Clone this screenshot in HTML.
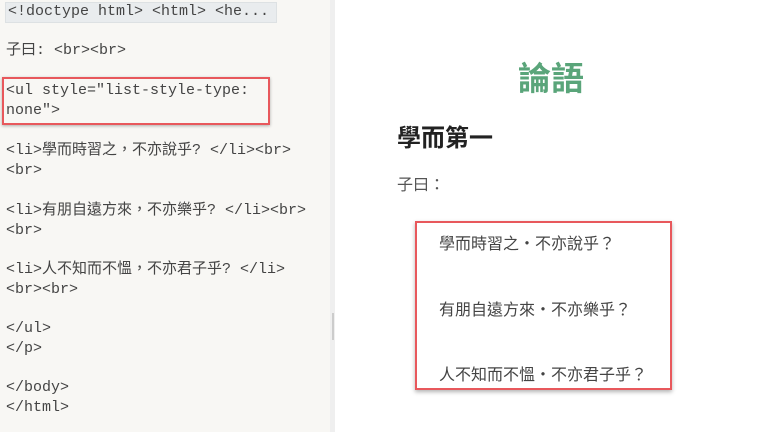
<!DOCTYPE html>
<html><head><meta charset="utf-8"><style>
body{margin:0;width:768px;height:432px;overflow:hidden;background:#fff;position:relative;font-family:"Liberation Sans","Noto Sans CJK TC",sans-serif}
#left{position:absolute;left:0;top:0;width:330px;height:432px;background:#f8f7f4}
#div{position:absolute;left:330px;top:0;width:5px;height:432px;background:#efefef}
#handle{position:absolute;left:332px;top:313px;width:2px;height:27px;background:#ccc}
.l{position:absolute;left:6px;font-family:"Liberation Mono","Noto Sans CJK TC",monospace;font-size:15px;color:#444;white-space:pre;line-height:20px}
.t{position:absolute;white-space:nowrap}
.i{font-family:"Noto Sans CJK TC",sans-serif}
</style></head><body>
<div id="left"></div><div id="div"></div><div id="handle"></div>
<div style="position:absolute;left:5px;top:2px;width:270px;height:19px;background:#e9ecee;border:1px solid #dde1e3"></div>
<div class="l" style="top:2px;left:8px">&lt;!doctype html&gt; &lt;html&gt; &lt;he...</div>
<div class="l" style="top:41px">子曰: &lt;br&gt;&lt;br&gt;</div>
<div style="position:absolute;left:2px;top:77px;width:264px;height:44px;border:2px solid #e8585c;box-shadow:0 1px 3px rgba(0,0,0,.3)"></div>
<div class="l" style="top:81px">&lt;ul style="list-style-type:
none"&gt;</div>
<div class="l" style="top:141px">&lt;li&gt;學而時習之，不亦說乎? &lt;/li&gt;&lt;br&gt;
&lt;br&gt;</div>
<div class="l" style="top:201px">&lt;li&gt;有朋自遠方來，不亦樂乎? &lt;/li&gt;&lt;br&gt;
&lt;br&gt;</div>
<div class="l" style="top:260px">&lt;li&gt;人不知而不慍，不亦君子乎? &lt;/li&gt;
&lt;br&gt;&lt;br&gt;</div>
<div class="l" style="top:319px">&lt;/ul&gt;
&lt;/p&gt;</div>
<div class="l" style="top:378px">&lt;/body&gt;
&lt;/html&gt;</div>

<div class="t" style="left:518px;top:52px;font-size:33px;font-weight:bold;color:#5aa57a">論語</div>
<div class="t" style="left:397px;top:118px;font-size:24px;font-weight:bold;color:#222">學而第一</div>
<div class="t" style="left:397px;top:171px;font-size:16px;color:#555">子曰：</div>
<div style="position:absolute;left:415px;top:221px;width:253px;height:165px;border:2px solid #e8585c;box-shadow:0 2px 4px rgba(0,0,0,.3)"></div>
<div class="t" style="left:439px;top:230px;font-size:16px;color:#444">學而時習之<span class="i">・</span>不亦說乎？</div>
<div class="t" style="left:439px;top:296px;font-size:16px;color:#444">有朋自遠方來<span class="i">・</span>不亦樂乎？</div>
<div class="t" style="left:439px;top:361px;font-size:16px;color:#444">人不知而不慍<span class="i">・</span>不亦君子乎？</div>
</body></html>
